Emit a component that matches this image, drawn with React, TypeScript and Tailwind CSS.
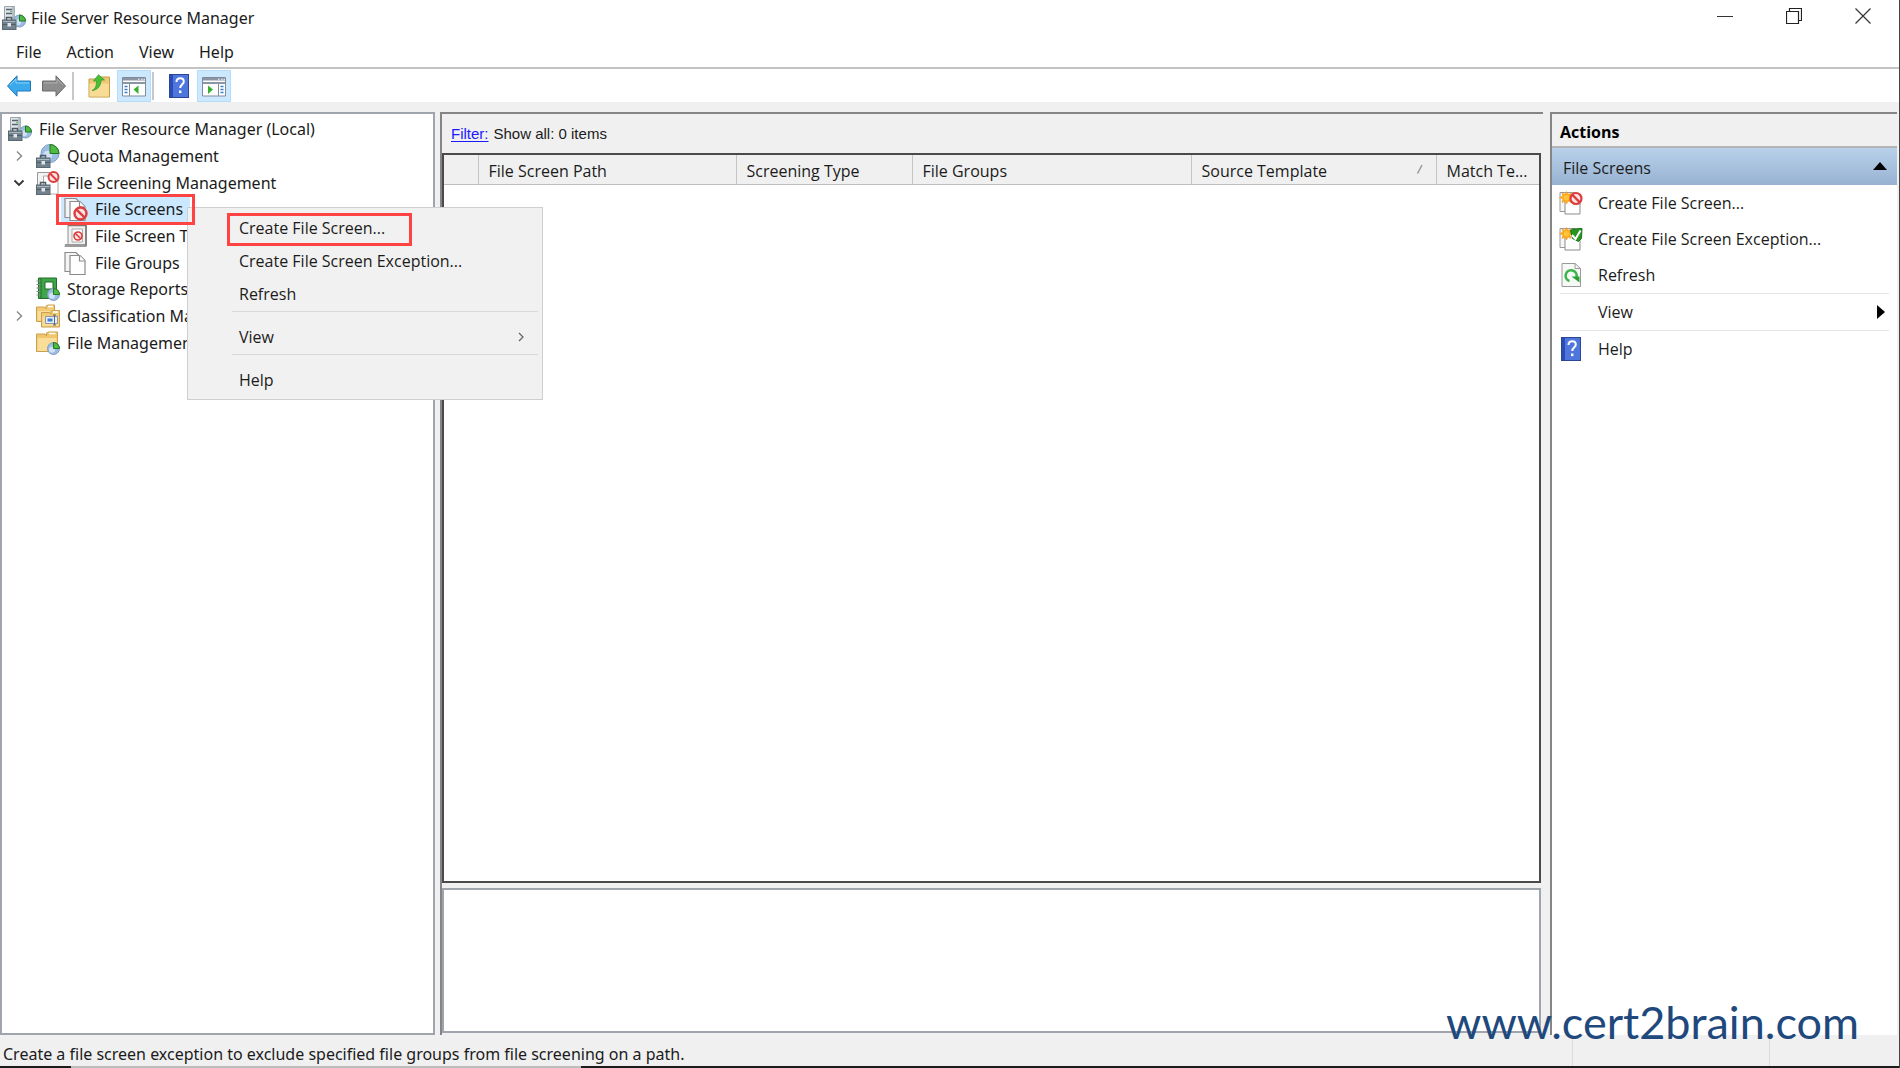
import type { ReactNode } from 'react';

function Svg({ children, className = 'size-6' }: { children: ReactNode; className?: string }) {
  return (
    <svg viewBox="0 0 24 24" className={`shrink-0 ${className}`} fill="none" aria-hidden="true">
      {children}
    </svg>
  );
}

// Shared icon parts

function Toolbox() {
  return (
    <g>
      <path d="M4.500 14v-2.500h5V14" stroke="#4d5a63" strokeWidth="1.500" />
      <rect x="0.500" y="14" width="13.500" height="9.500" fill="#71828e" stroke="#5b6870" />
      <path d="M1 15.500h12.500" stroke="#a9b7c0" />
      <path d="M1 18.500h12.500" stroke="#4f5d66" />
      <rect x="5.500" y="17" width="3.500" height="3.500" fill="#dfe5e8" />
    </g>
  );
}

function Pie({ cx, cy, r }: { cx: number; cy: number; r: number }) {
  return (
    <g>
      <circle cx={cx} cy={cy} r={r} fill="#9dbce2" stroke="#7f9cc4" />
      <circle cx={cx - r / 4} cy={cy + r / 5} r={r / 2} fill="#cfe1f5" />
      <path d={`M${cx} ${cy}V${cy - r}A${r} ${r} 0 0 1 ${cx + r} ${cy}Z`} fill="#4fb944" stroke="#1e7a1c" />
    </g>
  );
}

function NoSign({ cx, cy, r }: { cx: number; cy: number; r: number }) {
  const d = r * 0.7;
  return (
    <g stroke="#dd3d3d" strokeWidth={r / 2.5}>
      <circle cx={cx} cy={cy} r={r} fill="#fbe3e3" />
      <path d={`M${cx - d} ${cy - d}L${cx + d} ${cy + d}`} />
    </g>
  );
}

function Pages() {
  return (
    <g fill="#fff" stroke="#8b8b8b" strokeWidth="1.200">
      <path d="M1 1.500h11l3 3v16H1z" fill="#f4f4f4" />
      <path d="M6 4.500h10l5 5v14H6z" />
      <path d="M15.500 4.500V10H21" />
    </g>
  );
}

function ServerIcon() {
  return (
    <Svg>
      <path d="M2.500 0.500h10v20h-10z" fill="#dfe5e8" stroke="#9aa5ab" />
      <path d="M10 1h2.500v19H10z" fill="#b4bec4" />
      <path d="M4 3.500h6M4 7.500h6" stroke="#55636c" strokeWidth="1.500" />
      <circle cx="9" cy="5.500" r="0.800" fill="#45b13b" />
      <Pie cx={17.500} cy={15} r={6} />
      <Toolbox />
    </Svg>
  );
}

function QuotaIcon() {
  return (
    <Svg>
      <Pie cx={14} cy={9.500} r={9} />
      <Toolbox />
    </Svg>
  );
}

function ScreeningIcon() {
  return (
    <Svg>
      <path d="M1.500 1.500h12v18h-12z" fill="#f3f3f3" stroke="#999" />
      <path d="M7.500 5h14.500v18H7.500z" fill="#fff" stroke="#aaa" />
      <NoSign cx={17.500} cy={6} r={5} />
      <Toolbox />
    </Svg>
  );
}

function ScreensIcon() {
  return (
    <Svg>
      <Pages />
      <NoSign cx={16.500} cy={16.500} r={6} />
    </Svg>
  );
}

function TemplateIcon() {
  return (
    <Svg>
      <path d="M4 1h18.500v21H4z" fill="#f1f1f1" stroke="#8f8f8f" />
      <path d="M4 1.500h18.500" stroke="#8a7468" strokeWidth="1.500" />
      <path d="M1 20h20l1.500 3H0.500z" fill="#9a9a9a" />
      <path d="M8 5h10.500v13H8z" fill="#fff" stroke="#aaa" />
      <path d="M22 2v20" stroke="#858585" strokeWidth="2" />
      <NoSign cx={14} cy={12} r={4} />
    </Svg>
  );
}

function GroupsIcon() {
  return (
    <Svg>
      <Pages />
    </Svg>
  );
}

function ReportsIcon() {
  return (
    <Svg>
      <path d="M2.500 1h18v20.500h-18z" fill="#3fa648" stroke="#236c2b" />
      <path d="M5 1.500v19.500" stroke="#1e6d27" />
      <path d="M0.500 4h4M0.500 7.500h4M0.500 11h4M0.500 14.500h4M0.500 18h4" stroke="#888" />
      <path d="M9 5h8v7H9z" fill="#fff" stroke="#1f6a28" />
      <Pie cx={17.500} cy={17.500} r={6} />
    </Svg>
  );
}

function Folder({ x = 0, y = 0 }: { x?: number; y?: number }) {
  return (
    <g transform={`translate(${x} ${y})`}>
      <path d="M0.500 3h8l1.500 2V2l2-1h6.500v16.500h-18z" fill="#f2cb74" stroke="#c9a04f" />
      <path d="M12 2.500h5" stroke="#fff" strokeWidth="1.500" />
      <path d="M1.500 7h16v9.500h-16z" fill="#f9dd98" />
    </g>
  );
}

function ClassificationIcon() {
  return (
    <Svg>
      <Folder />
      <Folder x={5} y={5.500} />
      <path d="M9.500 12.500h12v7h-12z" fill="#e8eef5" stroke="#8a97a6" />
      <path d="M11.500 14.500h5v3h-5z" fill="#3d7fd0" />
      <path d="M18.500 11v10M17 11h3M17 21h3" stroke="#5f6b78" />
    </Svg>
  );
}

function FileTasksIcon() {
  return (
    <Svg>
      <path d="M0.500 3h8.500l1.500 2V2l2-1h9v19.500h-21z" fill="#f0c66d" stroke="#c9a04f" />
      <path d="M13 2.500h6.500" stroke="#fff" strokeWidth="1.500" />
      <path d="M1.500 7h19v13h-19z" fill="#f9dd98" />
      <Pie cx={17.500} cy={17.500} r={6} />
    </Svg>
  );
}

function HelpIcon() {
  return (
    <Svg>
      <rect x="2.500" y="0.500" width="19" height="23" fill="#4f76dc" stroke="#2c4594" />
      <path d="M3 1h3v22H3z" fill="#2a4db5" />
      <path d="M9.500 8c0-2.500 1.500-3.800 3.700-3.800s3.600 1.300 3.600 3.300c0 3-3.600 3.200-3.600 6.500" stroke="#fff" strokeWidth="2" />
      <rect x="12" y="16.500" width="2.400" height="2.600" fill="#fff" />
    </Svg>
  );
}

function ArrowIcon({ forward }: { forward?: boolean }) {
  return (
    <Svg>
      <path
        d={forward ? 'M23.500 12L14 1.800V7H0.500v10H14v5.200Z' : 'M0.500 12L10 1.800V7h13.500v10H10v5.200Z'}
        fill={forward ? '#8d8d8d' : '#3ba9ec'}
        stroke={forward ? '#6a6a6a' : '#1c79bb'}
      />
      <path d={forward ? 'M2 9h13V5l6 6' : 'M22 9H9V5L3 11'} stroke={forward ? '#b0b0b0' : '#8ad2fa'} />
    </Svg>
  );
}

function UpFolderIcon() {
  return (
    <Svg>
      <path d="M2 5h9l2-2h9.500v20H2z" fill="#efc873" stroke="#c49b49" />
      <path d="M2.500 9.500h19.500V22.500H2.500z" fill="#f8dc95" />
      <path d="M5 16.500c3.500-1.500 4.500-4.500 4.500-9.500H6.500L11.500 0.800 17.500 6h-3.500c0 5.500-3 10-9 10.500Z" fill="#47c038" stroke="#3a9a32" strokeWidth="0.800" />
    </Svg>
  );
}

function PaneIcon({ right }: { right?: boolean }) {
  return (
    <Svg>
      <path d="M0.500 3.500h23v18.500H0.500z" fill="#fff" stroke="#7f8b99" />
      <path d="M1 4h22v2.500H1zM1 8h22v2H1z" fill="#8a96a5" />
      <path d="M16 5.200h1.500M19 5.200h1.500M21.500 5.200H23" stroke="#fff" />
      {right ? (
        <>
          <path d="M16.500 10v12" stroke="#7f8b99" />
          <path d="M18.500 12.500h3M18.500 15.500h3M18.500 18.500h3" stroke="#3a7fca" strokeWidth="1.500" />
          <path d="M6 11.500l5 4-5 4.500z" fill="#35b02f" />
        </>
      ) : (
        <>
          <path d="M7.500 10v12" stroke="#7f8b99" />
          <path d="M2.500 12.500h3M2.500 15.500h3M2.500 18.500h3" stroke="#3a7fca" strokeWidth="1.500" />
          <path d="M16.500 11.500l-5 4 5 4.500z" fill="#35b02f" />
        </>
      )}
    </Svg>
  );
}

function NewScreenIcon({ exception }: { exception?: boolean }) {
  return (
    <Svg>
      <path d="M1 1.500h15v19H1z" fill="#f6f6f6" stroke="#9a9a9a" />
      <path d="M6 5h15v18H6z" fill="#fff" stroke="#8b8b8b" />
      <path
        d="M7.500 0.500l1.500 3 3-1.500-1 3.200 3.500 1.300-3.500 1.500 1 3.500-3-1.500-1.500 3-1.500-3-3 1.500 1-3.500-3.500-1.500 3.500-1.300-1-3.200 3 1.500z"
        fill="#ffa916"
        stroke="#f59a1c"
        strokeWidth="0.600"
      />
      <circle cx="7.500" cy="6.800" r="2.800" fill="#ffc43a" />
      {exception ? (
        <>
          <path d="M11.500 3.500l2-1.500 9.500-.5-.5 10-3 3-6-3z" fill="#2a9423" stroke="#18741a" />
          <path d="M13 8l3.500 4L21.500 3.500" stroke="#fff" strokeWidth="2" />
        </>
      ) : (
        <NoSign cx={17} cy={7.500} r={5.500} />
      )}
    </Svg>
  );
}

function RefreshIcon() {
  return (
    <Svg>
      <path d="M3 0.500h13l5.500 5v18H3z" fill="#f7f9f7" stroke="#9a9a9a" />
      <path d="M16 0.500v5h5.500" stroke="#9a9a9a" />
      <path d="M10.500 18A5.500 5.500 0 1 1 17.500 14" stroke="#3cb649" strokeWidth="2.600" />
      <path d="M12.500 13.500h8v6z" fill="#27a135" />
    </Svg>
  );
}

interface TreeNode {
  label: string;
  icon: ReactNode;
  level: number;
  chevron?: 'open' | 'closed';
  selected?: boolean;
}

const tree: TreeNode[] = [
  { label: 'File Server Resource Manager (Local)', icon: <ServerIcon />, level: 0 },
  { label: 'Quota Management', icon: <QuotaIcon />, level: 1, chevron: 'closed' },
  { label: 'File Screening Management', icon: <ScreeningIcon />, level: 1, chevron: 'open' },
  { label: 'File Screens', icon: <ScreensIcon />, level: 2, selected: true },
  { label: 'File Screen Templates', icon: <TemplateIcon />, level: 2 },
  { label: 'File Groups', icon: <GroupsIcon />, level: 2 },
  { label: 'Storage Reports Management', icon: <ReportsIcon />, level: 1 },
  { label: 'Classification Management', icon: <ClassificationIcon />, level: 1, chevron: 'closed' },
  { label: 'File Management Tasks', icon: <FileTasksIcon />, level: 1 },
];

function TreeRow({ node }: { node: TreeNode }) {
  const indent = ['pl-[6px]', 'pl-[10px]', 'pl-[59px]'][node.level];
  return (
    <li className={`flex items-center ${indent}`}>
      {node.level === 1 && (
        <span className="w-6 shrink-0">
          {node.chevron && (
            <svg viewBox="0 0 14 14" className="size-3.5" fill="none" aria-hidden="true">
              {node.chevron === 'open' ? (
                <path d="M2.500 4.500L7 9l4.500-4.500" stroke="#333" strokeWidth="1.800" />
              ) : (
                <path d="M5 2.500L9.500 7 5 11.500" stroke="#8c8c8c" strokeWidth="1.500" />
              )}
            </svg>
          )}
        </span>
      )}
      <button
        type="button"
        className={`relative flex h-full items-center gap-[7px] whitespace-nowrap ${node.level === 2 ? 'pl-[3px] pr-[7px]' : ''} ${node.selected ? 'bg-[#cce8ff]' : ''}`}
      >
        {node.icon}
        {node.label}
        {node.selected && <span className="absolute -inset-x-[5px] -inset-y-0.5 z-20 border-3 border-[#ff4343]" />}
      </button>
    </li>
  );
}

function MenuItem({ label, submenu, marked }: { label: string; submenu?: boolean; marked?: boolean }) {
  return (
    <button type="button" role="menuitem" className="relative flex h-[33px] w-full items-center justify-between pl-[51px] pr-3.5 text-left">
      {label}
      {submenu && (
        <svg viewBox="0 0 14 14" className="size-3.5" fill="none" aria-hidden="true">
          <path d="M5 3l4 4-4 4" stroke="#666" strokeWidth="1.300" />
        </svg>
      )}
      {marked && <span className="absolute -bottom-0.5 left-[39px] top-0.5 w-[185px] border-3 border-[#ff4343]" />}
    </button>
  );
}

function MenuSeparator() {
  return <div role="separator" className="mb-2 ml-11 mr-1 mt-px border-t border-[#d9d9d9]" />;
}

function ContextMenu() {
  return (
    <div role="menu" className="absolute left-[187px] top-[207px] z-10 w-[356px] border border-[#cfcfcf] bg-[#f1f1f1] py-[3px]">
      <MenuItem label="Create File Screen..." marked />
      <MenuItem label="Create File Screen Exception..." />
      <MenuItem label="Refresh" />
      <MenuSeparator />
      <MenuItem label="View" submenu />
      <MenuSeparator />
      <MenuItem label="Help" />
    </div>
  );
}

function ToolButton({ label, active, children }: { label: string; active?: boolean; children: ReactNode }) {
  return (
    <button
      type="button"
      aria-label={label}
      className={`flex h-8 w-[34px] items-center justify-center ${active ? 'border border-[#b5dcfb] bg-[#cce8ff]' : ''}`}
    >
      {children}
    </button>
  );
}

function ActionItem({ label, icon, arrow }: { label: string; icon?: ReactNode; arrow?: boolean }) {
  return (
    <button type="button" className="flex h-9 w-full items-center pl-[7px] pr-3 text-left">
      <span className="w-[39px] shrink-0">{icon}</span>
      <span className="flex-1">{label}</span>
      {arrow && (
        <svg viewBox="0 0 8 14" className="h-3.5 w-2" aria-hidden="true">
          <path d="M0 0l8 7-8 7z" fill="#000" />
        </svg>
      )}
    </button>
  );
}

const columns = [
  { label: 'File Screen Path', width: 'w-[258px]' },
  { label: 'Screening Type', width: 'w-44' },
  { label: 'File Groups', width: 'w-[279px]' },
  { label: 'Source Template', width: 'w-[245px]', sorted: true },
  { label: 'Match Te...', width: '' },
];

export default function App() {
  return (
    <div className="relative flex h-screen flex-col overflow-hidden border-r border-[#444] bg-[#f0f0f0] font-['Open_Sans','Noto_Sans',sans-serif] text-[16px] leading-6 text-[#1b1b1b]">
      <header className="bg-white font-['Noto_Sans','Open_Sans',sans-serif]">
        <div className="flex h-9 items-center">
          <div className="flex flex-1 items-center gap-[5px] pl-0.5">
            <ServerIcon />
            <h1>File Server Resource Manager</h1>
          </div>
          <div className="flex self-start pr-0.5">
            <button type="button" aria-label="Minimize" className="flex h-8 w-[69px] items-center justify-center">
              <svg viewBox="0 0 16 16" className="size-4" aria-hidden="true">
                <path d="M0 8.500h16" stroke="#333" />
              </svg>
            </button>
            <button type="button" aria-label="Restore" className="flex h-8 w-[69px] items-center justify-center">
              <svg viewBox="0 0 16 16" className="size-4" fill="none" aria-hidden="true">
                <path d="M0.500 3.500h12v12h-12zM3.500 3.500v-3h12v12h-3" stroke="#222" strokeWidth="1.200" />
              </svg>
            </button>
            <button type="button" aria-label="Close" className="flex h-8 w-[69px] items-center justify-center">
              <svg viewBox="0 0 16 16" className="size-4" aria-hidden="true">
                <path d="M0.500 0.500l15 15M15.500 0.500l-15 15" stroke="#333" strokeWidth="1.200" />
              </svg>
            </button>
          </div>
        </div>
        <nav className="flex h-[31px] items-center gap-[25px] pl-4">
          <button type="button">File</button>
          <button type="button">Action</button>
          <button type="button">View</button>
          <button type="button">Help</button>
        </nav>
        <div className="flex h-[35px] items-center gap-px border-t-2 border-[#c3c3c3] pl-0.5">
          <ToolButton label="Back"><ArrowIcon /></ToolButton>
          <ToolButton label="Forward"><ArrowIcon forward /></ToolButton>
          <div className="mr-[7px] h-7 w-0.5 bg-[#c8c8c8]" />
          <ToolButton label="Up one level"><UpFolderIcon /></ToolButton>
          <ToolButton label="Show or hide console tree" active><PaneIcon /></ToolButton>
          <div className="mr-[7px] h-7 w-0.5 bg-[#c8c8c8]" />
          <ToolButton label="Help"><HelpIcon /></ToolButton>
          <ToolButton label="Show or hide action pane" active><PaneIcon right /></ToolButton>
        </div>
      </header>

      <main className="flex min-h-0 flex-1 pt-2.5">
        <nav className="w-[435px] shrink-0 border-2 border-[#a0a4ad] bg-white font-['Noto_Sans','Open_Sans',sans-serif]">
          <ul className="mt-0.5 grid h-60 auto-rows-fr">
            {tree.map((node) => (
              <TreeRow key={node.label} node={node} />
            ))}
          </ul>
        </nav>

        <section className="ml-[5px] mr-[7px] flex min-w-0 flex-1 flex-col border-l-2 border-t-2 border-[#858585] pr-0.5">
          <div className="flex h-[39px] items-center gap-[5px] pl-[9px] font-['Liberation_Sans',Arial,sans-serif] text-[15px]">
            <a href="#filter" className="text-[#1a1aff] underline underline-offset-2">Filter:</a>
            <span>Show all: 0 items</span>
          </div>
          <div className="min-h-0 flex-1 border-2 border-[#4a4a4a] bg-white">
            <table className="w-full table-fixed border-collapse bg-[#f0f0f0]">
              <thead>
                <tr className="h-[29px] border-b border-[#bdbdbd]">
                  <th className="w-[34px] border-r border-[#c4c4c4]" aria-label="Status" />
                  {columns.map((col) => (
                    <th key={col.label} className={`border-r border-[#c4c4c4] pl-2.5 pr-3 pt-1 text-left font-normal last:border-r-0 last:pr-0 ${col.width}`}>
                      <span className="flex items-center justify-between whitespace-nowrap">
                        {col.label}
                        {col.sorted && (
                          <svg viewBox="0 0 8 10" className="mb-1 h-2.5 w-2" aria-hidden="true">
                            <path d="M1.500 9.500L6 1" stroke="#999" strokeWidth="1.500" />
                          </svg>
                        )}
                      </span>
                    </th>
                  ))}
                </tr>
              </thead>
            </table>
          </div>
          <div className="mb-0.5 mt-[5px] h-[145px] border-2 border-[#a0a4ad] bg-white" />
        </section>

        <aside className="mr-0.5 flex w-[347px] shrink-0 flex-col border-l-2 border-t-2 border-[#858585] bg-white">
          <h2 className="flex h-[34px] items-center border-b-2 border-[#b5b5b5] bg-[#f0f0f0] pl-2 pt-1 font-bold text-black">Actions</h2>
          <button type="button" className="flex h-[37px] items-center justify-between bg-linear-to-b from-[#b9d1ea] to-[#97b2d2] pl-[11px] pr-2.5 pt-0.5 text-left">
            File Screens
            <svg viewBox="0 0 14 8" className="mb-1 h-2 w-3.5" aria-hidden="true">
              <path d="M7 0l7 8H0z" fill="#000" />
            </svg>
          </button>
          <div>
            <ActionItem label="Create File Screen..." icon={<NewScreenIcon />} />
            <ActionItem label="Create File Screen Exception..." icon={<NewScreenIcon exception />} />
            <ActionItem label="Refresh" icon={<RefreshIcon />} />
            <hr className="mx-2 border-[#e6e6e6]" />
            <ActionItem label="View" arrow />
            <hr className="mx-2 border-[#e6e6e6]" />
            <ActionItem label="Help" icon={<HelpIcon />} />
          </div>
        </aside>
      </main>

      <footer>
        <div className="flex h-[31px] items-center">
          <p className="flex-1 pl-[3px] pt-1.5 font-['Noto_Sans','Open_Sans',sans-serif]">
            Create a file screen exception to exclude specified file groups from file screening on a path.
          </p>
          <div className="h-full w-[197px] border-l border-[#dcdcdc]" />
          <div className="h-full w-[130px] border-l border-[#dcdcdc]" />
        </div>
        <div className="flex h-0.5 bg-[#1c1c1c]">
          <div className="ml-[71px] w-[510px] bg-[#bdbdbd]" />
        </div>
      </footer>

      <ContextMenu />
      <p className="absolute bottom-5 right-10 z-10 font-['Lato',sans-serif] text-[45px] leading-[52px] text-[#1f497d]">www.cert2brain.com</p>
    </div>
  );
}
